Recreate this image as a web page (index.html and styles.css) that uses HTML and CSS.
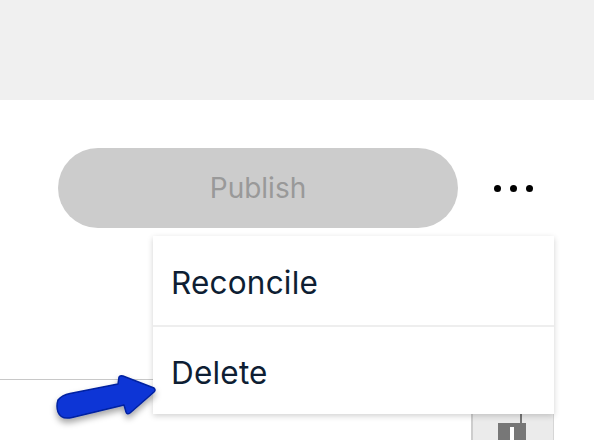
FILE: index.html
```html
<!DOCTYPE html>
<html>
<head>
<meta charset="utf-8">
<link rel="stylesheet" href="styles.css">
</head>
<body>
<div class="page">
  <div class="top"></div>
  <div class="toolbar">
    <button class="publish">Publish</button>
    <div class="dots"><span></span><span></span><span></span></div>
  </div>
  <div class="field"></div>
  <div class="tool">
    <div class="tool-stem"></div>
    <div class="tool-block"><span></span></div>
  </div>

  <div class="menu">
    <div class="item">Reconcile</div>
    <div class="item">Delete</div>
  </div>

  <svg class="arrow" width="120" height="60" viewBox="0 0 120 60">
    <defs>
      <filter id="sh" x="-20%" y="-40%" width="140%" height="200%">
        <feDropShadow dx="0" dy="4" stdDeviation="3" flood-color="#000" flood-opacity="0.35"/>
      </filter>
    </defs>
    <path filter="url(#sh)" d="M10 28 Q14 23 22 21.5 L70 12 L71 5 Q72 3 75 4 L106 16 Q108 18 106 20 L82 41 Q79 43 78 40 L76 33 L24 45.5 Q13 48 10 40 Q8 34 10 28 Z" fill="#0a35d6" stroke="#0521a0" stroke-width="1.5" stroke-linejoin="round"/>
  </svg>
</div>
</body>
</html>
```
FILE: styles.css
```css
* { box-sizing: border-box; }
html, body { margin: 0; padding: 0; background: #fff; }
body { font-family: Inter, "Noto Sans", sans-serif; }
.page { position: relative; width: 594px; height: 440px; overflow: hidden; }
.top { height: 100px; background: #f0f0f0; }
.toolbar { display: flex; align-items: center; padding: 48px 0 0 58px; }
.publish {
  width: 400px; height: 80px; border: none; border-radius: 40px;
  background: #cccccc; color: #999999; font-family: Inter, sans-serif;
  font-size: 28px; padding: 0;
}
.dots { display: flex; gap: 9px; margin-left: 36px; }
.dots span { width: 7px; height: 7px; border-radius: 50%; background: #000; }
.field { width: 470px; height: 152px; border-bottom: 1px solid #c8c8c8; }
.tool {
  margin: 33px 0 0 471px; width: 83px; height: 40px;
  background: #ebebeb; border-left: 2px solid #cdcdcd; border-right: 1px solid #d6d6d6;
  position: relative;
}
.tool-stem { position: absolute; left: 47px; top: 0; width: 2px; height: 10px; background: #777; }
.tool-block { position: absolute; left: 25px; top: 10px; width: 28px; height: 30px; background: #777; }
.tool-block span { position: absolute; left: 12px; top: 4px; width: 4px; height: 26px; background: #fff; }
.menu {
  position: absolute; left: 153px; top: 236px; width: 401px;
  background: #fff; box-shadow: 0 2px 6px rgba(0,0,0,0.18);
}
.item {
  height: 89px; display: flex; align-items: center; padding: 3px 0 0 18px;
  font-size: 31.5px; letter-spacing: 0.2px; color: #0e1e33;
}
.item + .item { border-top: 2px solid #eeeeee; }
.arrow { position: absolute; left: 48px; top: 372px; }
```
